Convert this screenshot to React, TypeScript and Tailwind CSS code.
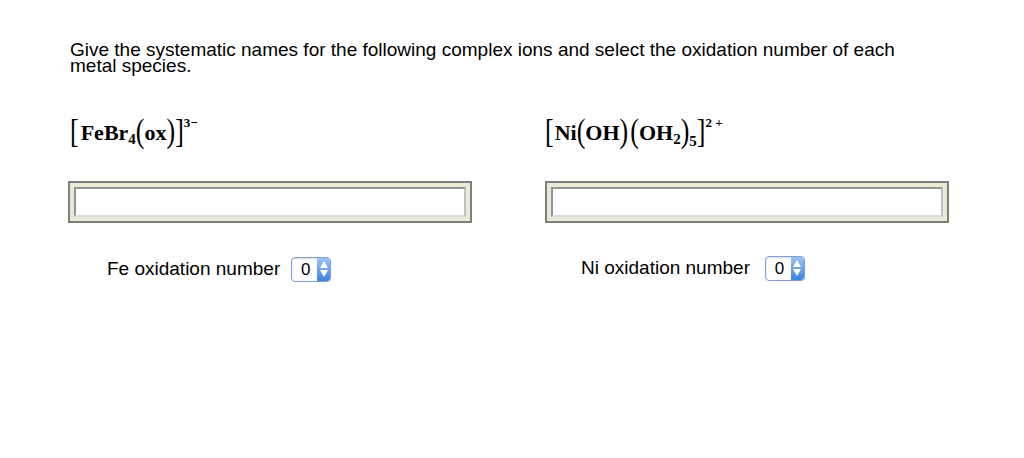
import React from "react";

const Spinner: React.FC = () => (
  <div className="flex h-[25px] w-[40px] items-stretch overflow-hidden rounded-[4px] border border-[#7f9fd6] bg-white shadow-[inset_0_1px_2px_rgba(0,0,0,0.15)]">
    <div className="flex flex-1 items-center justify-center pl-[2px] text-[17px] text-black">0</div>
    <div className="flex w-[13px] flex-col items-center justify-center gap-[2px] rounded-r-[3px] bg-gradient-to-b from-[#9cc3f5] to-[#3d83e0]">
      <svg width="8" height="7" viewBox="0 0 8 7">
        <path d="M4 0 L8 7 L0 7 Z" fill="#ffffff" />
      </svg>
      <svg width="8" height="7" viewBox="0 0 8 7">
        <path d="M0 0 L8 0 L4 7 Z" fill="#ffffff" />
      </svg>
    </div>
  </div>
);

const NameBox: React.FC = () => (
  <div className="h-[42px] w-[404px] border-2 border-[#7c807e] bg-[#ebe8d6] p-[4px]">
    <div className="h-full w-full border-2 border-t-[#8f9693] border-l-[#8f9693] border-r-[#b8c4c4] border-b-[#d9dede] bg-white" />
  </div>
);

const Bracket: React.FC<{ ch: string }> = ({ ch }) => (
  <span className="inline-block scale-y-[1.3] font-normal text-[26px] leading-none">{ch}</span>
);

const serif = { fontFamily: '"Liberation Serif", "Times New Roman", serif' };

export default function App() {
  return (
    <div className="h-[458px] w-[1024px] bg-white pl-[70px] pt-[42px] text-black" style={{ fontFamily: '"Liberation Sans", Arial, sans-serif' }}>
      <p className="w-[840px] text-[19px] leading-[16px]">
        Give the systematic names for the following complex ions and select the oxidation number of each metal species.
      </p>

      <div className="mt-[38px] -ml-[2px] grid grid-cols-[404px_404px] gap-x-[73px]">
        <div className="flex h-[40px] items-center pl-[2px] font-bold text-[22px]" style={serif}>
          <Bracket ch="[" />
          <span className="ml-[2px]">FeBr</span>
          <span className="relative top-[7px] text-[15px]">4</span>
          <Bracket ch="(" />
          <span>ox</span>
          <Bracket ch=")" />
          <Bracket ch="]" />
          <span className="relative -top-[9px] text-[13px]">3−</span>
        </div>
        <div className="flex h-[40px] items-center font-bold text-[22px]" style={serif}>
          <Bracket ch="[" />
          <span className="ml-[1px]">Ni</span>
          <Bracket ch="(" />
          <span>OH</span>
          <Bracket ch=")" />
          <span className="w-[2px]" />
          <Bracket ch="(" />
          <span>OH</span>
          <span className="relative top-[7px] text-[15px]">2</span>
          <Bracket ch=")" />
          <span className="relative top-[9px] text-[15px]">5</span>
          <Bracket ch="]" />
          <span className="relative -top-[9px] text-[13px]">2 +</span>
        </div>

        <div className="mt-[29px]"><NameBox /></div>
        <div className="mt-[29px]"><NameBox /></div>

        <div className="mt-[32px] flex items-center pl-[39px]">
          <span className="text-[19px]">Fe oxidation number</span>
          <span className="ml-[11px]"><Spinner /></span>
        </div>
        <div className="mt-[30px] flex items-center pl-[36px]">
          <span className="text-[19px]">Ni oxidation number</span>
          <span className="ml-[15px]"><Spinner /></span>
        </div>
      </div>
    </div>
  );
}
